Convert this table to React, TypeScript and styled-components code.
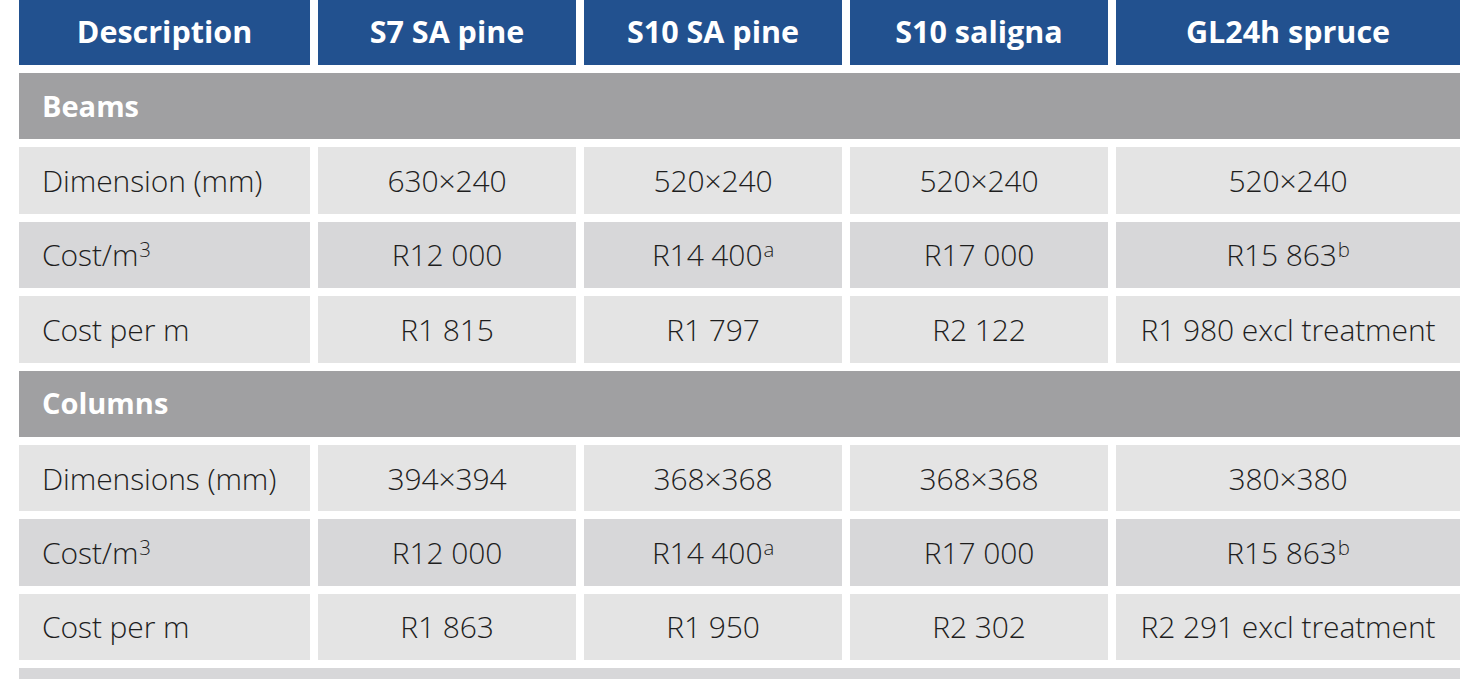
import React from 'react'
import styled, { createGlobalStyle } from 'styled-components'

const GlobalStyle = createGlobalStyle`
    html, body {
        margin : 0;
        padding : 0;
        background : #ffffff;
    }
    body {
        font-family : 'Open Sans', 'Noto Sans', sans-serif;
    }
`

const Page = styled.div`
    padding-left : 19px;
    height : 679px;
    overflow : hidden;
`

const Grid = styled.div`
    display : grid;
    grid-template-columns : 291px 258px 258px 258px 344px;
    grid-auto-rows : 66.4px;
    grid-template-rows : 65px;
    gap : 8px;
`

const HeadCell = styled.div`
    display : flex;
    align-items : center;
    justify-content : center;
    background-color : #22518f;
    color : #ffffff;
    font-weight : 700;
    font-size : 30.5px;
    letter-spacing : 0;
    padding-bottom : 3px;
`

const SectionCell = styled.div`
    grid-column : 1 / -1;
    display : flex;
    align-items : center;
    padding-left : 23px;
    background-color : #a0a0a2;
    color : #ffffff;
    font-weight : 700;
    font-size : 29px;
    padding-bottom : 2px;
`

const Cell = styled.div<{ $dark?: boolean; $label?: boolean }>`
    display : flex;
    align-items : center;
    justify-content : ${p => (p.$label ? 'flex-start' : 'center')};
    padding-left : ${p => (p.$label ? '23px' : '0')};
    background-color : ${p => (p.$dark ? '#d7d7d9' : '#e4e4e4')};
    color : #1e1e1e;
    font-weight : 300;
    font-size : 30px;
    letter-spacing : -0.1px;
    white-space : nowrap;

    sup {
        font-size : 0.68em;
        line-height : 0;
        position : relative;
        top : -0.28em;
        margin-left : 1px;
    }
`

const Blank = styled.div`
    grid-column : 1 / -1;
    background-color : #d7d7d9;
`

type RowData = { label: React.ReactNode; values: React.ReactNode[]; dark?: boolean }

const costM3 = (
    <>
        Cost/m<sup>3</sup>
    </>
)

const sections: { title: string; rows: RowData[] }[] = [
    {
        title: 'Beams',
        rows: [
            { label: 'Dimension (mm)', values: ['630×240', '520×240', '520×240', '520×240'] },
            {
                label: costM3,
                dark: true,
                values: [
                    'R12 000',
                    <>R14 400<sup>a</sup></>,
                    'R17 000',
                    <>R15 863<sup>b</sup></>,
                ],
            },
            { label: 'Cost per m', values: ['R1 815', 'R1 797', 'R2 122', 'R1 980 excl treatment'] },
        ],
    },
    {
        title: 'Columns',
        rows: [
            { label: 'Dimensions (mm)', values: ['394×394', '368×368', '368×368', '380×380'] },
            {
                label: costM3,
                dark: true,
                values: [
                    'R12 000',
                    <>R14 400<sup>a</sup></>,
                    'R17 000',
                    <>R15 863<sup>b</sup></>,
                ],
            },
            { label: 'Cost per m', values: ['R1 863', 'R1 950', 'R2 302', 'R2 291 excl treatment'] },
        ],
    },
]

const headers = ['Description', 'S7 SA pine', 'S10 SA pine', 'S10 saligna', 'GL24h spruce']

const App = () => {
    return (
        <Page>
            <GlobalStyle />
            <Grid>
                {headers.map(h => (
                    <HeadCell key={h}>{h}</HeadCell>
                ))}
                {sections.map(section => (
                    <React.Fragment key={section.title}>
                        <SectionCell>{section.title}</SectionCell>
                        {section.rows.map((row, i) => (
                            <React.Fragment key={i}>
                                <Cell $label $dark={row.dark}>{row.label}</Cell>
                                {row.values.map((v, j) => (
                                    <Cell key={j} $dark={row.dark}>{v}</Cell>
                                ))}
                            </React.Fragment>
                        ))}
                    </React.Fragment>
                ))}
                <Blank />
            </Grid>
        </Page>
    )
}

export default App
